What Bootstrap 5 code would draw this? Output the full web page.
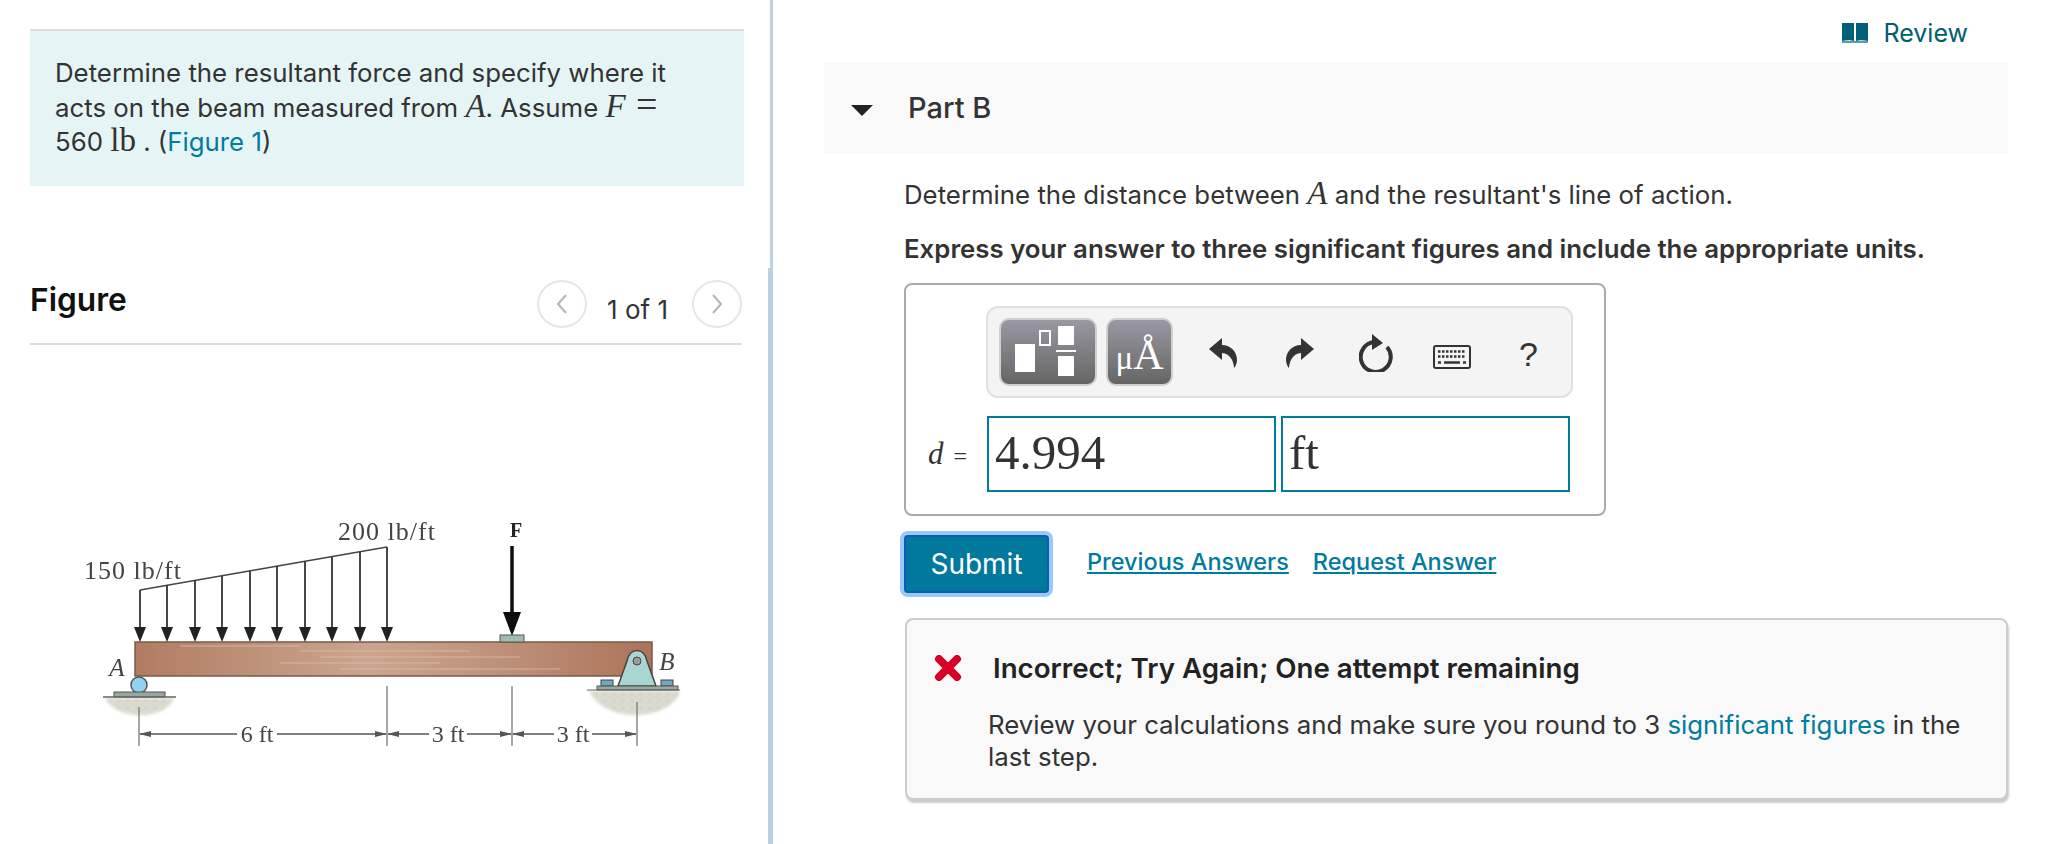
<!DOCTYPE html>
<html lang="en">
<head>
  <meta charset="UTF-8">
  <title>Part B</title>
  <link href="https://cdn.jsdelivr.net/npm/bootstrap@5.3.2/dist/css/bootstrap.min.css" rel="stylesheet">
  <style>
    html, body { height: 844px; overflow: hidden; }
    body { font-family: Inter, "Liberation Sans", Arial, sans-serif; font-size: 25.8px; line-height: 34px; color: #333; background: #fff; }
    a { color: #007c9e; text-decoration: none; }
    .math { font-family: "Liberation Serif", serif; font-size: 33px; line-height: 0; }
    .math-eq { font-size: 38px; margin-left: 3px; }
    .left-pane { width: 773px; height: 844px; flex: none; padding: 29px 28px 0 30px; border-right: 3px solid #bccfe4; position: relative; }
    .left-pane::after { content: ""; position: absolute; right: 0; top: 268px; bottom: 0; width: 2px; background: #bccfe4; }
    .intro-box { width: 714px; height: 157px; padding: 25px 25px 0; background: #e5f5f6; border-top: 2px solid #ddd; line-height: 34.5px; white-space: nowrap; }
    .fig-head { width: 712px; height: 67px; margin-top: 92px; border-bottom: 2px solid #ddd; }
    .fig-title { font-size: 31.7px; font-weight: 600; color: #111; line-height: 40px; margin-top: 2px; }
    .pager { width: 50px; height: 48px; border: 2px solid #e6e6e6; border-radius: 50%; }
    .pager-text { width: 64px; margin: 12px 21px 0 20px; font-size: 26px; line-height: 36px; white-space: nowrap; }
    .fig-svg { display: block; margin-left: -30px; }
    .right-pane { padding: 0 38px 0 51px; flex: 1 1 auto; min-width: 0; }
    .review-row { height: 62px; padding: 16px 40px 0 0; font-size: 25px; }
    .review-row a { color: #005e70; }
    .part-bar { height: 92px; background: #f9f9f9; padding-left: 27px; font-size: 29px; font-weight: 500; }
    .part-bar svg { margin: 4px 35px 0 0; }
    .part-body { padding-left: 80px; }
    .q-line { margin: 24px 0 0; }
    .q-bold { margin: 20px 0 0; font-weight: 600; }
    .answer-box { width: 702px; height: 233px; margin: 17px 0 0; border: 2px solid #aaa; border-radius: 8px; padding: 21px 0 0 80px; }
    .tool-bar { width: 587px; height: 92px; background: #f4f4f4; border: 2px solid #e0e0e0; border-radius: 12px; }
    .tool-btn { height: 68px; background: linear-gradient(#9a98a2, #656565); border: 2px solid #d0d0d0; border-radius: 10px; color: #fff; }
    .tool-one { width: 98px; margin: 10px 0 0 11px; }
    .tool-two { width: 67px; margin: 10px 0 0 9px; font-family: "Liberation Serif", serif; font-size: 42px; line-height: 70px; text-align: center; }
    .tool-two span { font-size: 33px; }
    .undo-ico { margin: 30px 0 0 36px; }
    .redo-ico { margin: 30px 0 0 49px; }
    .reload-ico { margin: 26px 0 0 45px; }
    .keys-ico { margin: 37px 0 0 38px; }
    .help-mark { margin: 29px 0 0 48px; font-family: "Liberation Sans", sans-serif; font-size: 34px; line-height: 34px; }
    .input-row { margin: 18px 0 0 -63px; }
    .var-label { width: 64px; font-family: "Liberation Serif", serif; font-size: 24px; line-height: 76px; padding-left: 5px; white-space: nowrap; }
    .var-label i { font-size: 31px; margin-right: 10px; }
    .mq-input { width: 289px; height: 76px; border: 2px solid #007c9e; font-family: "Liberation Serif", serif; font-size: 49px; line-height: 70px; padding-left: 6px; }
    .mq-input + .mq-input { margin-left: 5px; }
    .submit-row { margin-top: 19px; }
    .submit-btn { width: 145px; height: 58px; background: #00799c; border: 2px solid #0a5fb0; border-radius: 4px; box-shadow: 0 0 0 4px #9ac8fb; color: #fff; font-size: 28px; padding: 0; line-height: 54px; }
    .submit-row a { text-decoration: underline; font-size: 23.5px; font-weight: 500; line-height: 34px; }
    .prev-link { margin: 10px 0 0 38px; }
    .req-link { margin: 10px 0 0 24px; }
    .feedback-box { width: 1103px; height: 182px; margin: 25px 0 0 1px; background: #f9f9f9; border: 2px solid #ccc; border-radius: 8px; box-shadow: 1px 3px 2px #ccc; padding: 31px 20px 0 27px; }
    .fb-title { font-size: 27.7px; font-weight: 600; color: #222; margin-left: 31px; }
    .fb-text { margin: 24px 0 0 54px; line-height: 32px; }
  </style>
</head>
<body>
<div class="d-flex">

  <div class="left-pane">
    <div class="intro-box">
      Determine the resultant force and specify where it<br>
      acts on the beam measured from <i class="math">A</i>. Assume <i class="math">F</i> <span class="math math-eq">=</span><br>
      560 <span class="math">lb</span> . (<a href="#">Figure 1</a>)
    </div>
    <div class="fig-head d-flex justify-content-between">
      <div class="fig-title">Figure</div>
      <div class="d-flex align-items-start" style="margin-top:2px">
        <div class="pager d-flex align-items-center justify-content-center">
          <svg width="12" height="22" viewBox="0 0 12 22"><path d="M10 2 2 11l8 9" fill="none" stroke="#b5b5b5" stroke-width="2"/></svg>
        </div>
        <div class="pager-text">1 of 1</div>
        <div class="pager d-flex align-items-center justify-content-center">
          <svg width="12" height="22" viewBox="0 0 12 22"><path d="M2 2l8 9-8 9" fill="none" stroke="#b5b5b5" stroke-width="2"/></svg>
        </div>
      </div>
    </div>

    <!-- beam figure, drawn in page coordinates -->
    <svg class="fig-svg" width="770" height="498" viewBox="0 346 770 498">
      <defs>
        <linearGradient id="beamFill" x1="0" x2="1" y1="0" y2="0">
          <stop offset="0" stop-color="#b07c62"/>
          <stop offset=".45" stop-color="#cba58f"/>
          <stop offset=".7" stop-color="#bf917a"/>
          <stop offset="1" stop-color="#ab7459"/>
        </linearGradient>
        <pattern id="speckle" width="9" height="7" patternUnits="userSpaceOnUse">
          <rect width="9" height="7" fill="#dcdcd0"/>
          <circle cx="2" cy="2" r="1" fill="#a9a99a"/>
          <circle cx="7" cy="5" r=".8" fill="#b5b5a8"/>
        </pattern>
        <filter id="soft"><feGaussianBlur stdDeviation=".5"/></filter>
        <filter id="softer"><feGaussianBlur stdDeviation="1.6"/></filter>
        <marker id="dimEnd" markerWidth="12" markerHeight="8" refX="11" refY="4" orient="auto-start-reverse" markerUnits="userSpaceOnUse"><path d="M0 1 12 4 0 7z" fill="#555"/></marker>
      </defs>
      <g filter="url(#soft)">
        <!-- ground -->
        <path d="M105 699H174C170 708 160 716 140 716 120 716 110 708 105 699Z" fill="url(#speckle)" filter="url(#softer)"/>
        <path d="M589 692H680C678 704 660 716 635 716 610 716 595 704 589 692Z" fill="url(#speckle)" filter="url(#softer)"/>
        <!-- beam -->
        <rect x="135" y="643" width="517" height="34" fill="url(#beamFill)" stroke="#7a5a4c" stroke-width="1.500"/>
        <g stroke="#e0c3b0" stroke-width="1" opacity=".7">
          <path d="M300 652H470M320 658H520M280 664H440M340 670H560M180 647H300"/>
        </g>
        <!-- distributed load -->
        <path d="M140 591 387 548" fill="none" stroke="#444" stroke-width="1.500"/>
        <g stroke="#333" stroke-width="1.800">
          <path d="M140 591V630M167 586V630M195 581V630M222 577V630M250 572V630M277 567V630M305 562V630M332 558V630M360 553V630M387 548V630"/>
        </g>
        <g fill="#222">
          <path d="M134 628h12l-6 15zM161 628h12l-6 15zM189 628h12l-6 15zM216 628h12l-6 15zM244 628h12l-6 15zM271 628h12l-6 15zM299 628h12l-6 15zM326 628h12l-6 15zM354 628h12l-6 15zM381 628h12l-6 15z"/>
        </g>
        <!-- F -->
        <path d="M512 547V618" stroke="#111" stroke-width="3.500"/>
        <path d="M503 613h18l-9 24z" fill="#111"/>
        <rect x="500" y="636" width="24" height="7" fill="#9dbcae" stroke="#555"/>
        <!-- roller A -->
        <circle cx="139" cy="686" r="8" fill="#8fd3f2" stroke="#555" stroke-width="1.500"/>
        <rect x="114" y="693" width="51" height="5" fill="#94a89f" stroke="#555"/>
        <path d="M103 698H176" stroke="#666" stroke-width="1.500"/>
        <!-- pin B -->
        <path d="M618 687 627 662C630 648 644 648 647 662L656 687Z" fill="#a9d5d2" stroke="#444" stroke-width="1.500"/>
        <circle cx="637" cy="662" r="4" fill="#999" stroke="#444"/>
        <rect x="601" y="681" width="12" height="6" fill="#6fa8c0" stroke="#444"/>
        <rect x="661" y="681" width="12" height="6" fill="#6fa8c0" stroke="#444"/>
        <rect x="597" y="687" width="81" height="4" fill="#94a89f" stroke="#555"/>
        <path d="M587 691H680" stroke="#666" stroke-width="1"/>
        <!-- dimension lines -->
        <g stroke="#777" stroke-width="1.300" fill="none">
          <path d="M139 708V747M387 687V747M512 687V747M637 703V747"/>
        </g>
        <g stroke="#555" stroke-width="1.300" fill="none">
          <path d="M140 735H237" marker-start="url(#dimEnd)"/>
          <path d="M277 735H386" marker-end="url(#dimEnd)"/>
          <path d="M388 735H429" marker-start="url(#dimEnd)"/>
          <path d="M467 735H511" marker-end="url(#dimEnd)"/>
          <path d="M513 735H554" marker-start="url(#dimEnd)"/>
          <path d="M592 735H636" marker-end="url(#dimEnd)"/>
        </g>
        <g font-family="Liberation Serif, serif" fill="#444" font-size="24">
          <text x="387" y="541" text-anchor="middle" font-size="26" letter-spacing="1">200 lb/ft</text>
          <text x="133" y="580" text-anchor="middle" font-size="26" letter-spacing="1">150 lb/ft</text>
          <text x="516" y="538" text-anchor="middle" font-weight="700" font-size="20" fill="#222">F</text>
          <text x="117" y="677" text-anchor="middle" font-style="italic" font-size="25">A</text>
          <text x="667" y="671" text-anchor="middle" font-style="italic" font-size="25">B</text>
          <text x="257" y="743" text-anchor="middle">6 ft</text>
          <text x="448" y="743" text-anchor="middle">3 ft</text>
          <text x="573" y="743" text-anchor="middle">3 ft</text>
        </g>
      </g>
    </svg>
  </div>

  <div class="right-pane">
    <div class="review-row d-flex justify-content-end align-items-start">
      <a href="#" class="d-flex align-items-center gap-3">
        <svg width="26" height="20" viewBox="0 0 26 20"><path d="M0 0h12v18c-3-1-8-1-12 0zM14 0h12v18c-4-1-9-1-12 0z" fill="#00607a"/><path d="M0 19h26" stroke="#5d9cae" stroke-width="2"/></svg>
        Review
      </a>
    </div>
    <div class="part-bar d-flex align-items-center">
      <svg width="22" height="11" viewBox="0 0 22 11"><path d="M0 0h22L11 11z" fill="#222"/></svg>
      <span>Part B</span>
    </div>
    <div class="part-body">
      <p class="q-line">Determine the distance between <i class="math">A</i> and the resultant's line of action.</p>
      <p class="q-bold">Express your answer to three significant figures and include the appropriate units.</p>

      <div class="answer-box">
        <div class="tool-bar d-flex align-items-start">
          <div class="tool-btn tool-one">
            <svg width="94" height="64" viewBox="1000 320 94 64">
              <rect x="1014" y="344" width="20" height="28" fill="#fff"/>
              <rect x="1039" y="331" width="10" height="14" fill="none" stroke="#fff" stroke-width="2"/>
              <rect x="1057" y="326" width="16" height="19" fill="#fff"/>
              <rect x="1055" y="350" width="20" height="2" fill="#fff"/>
              <rect x="1057" y="356" width="16" height="20" fill="#fff"/>
            </svg>
          </div>
          <div class="tool-btn tool-two"><span>μ</span>Å</div>
          <svg class="undo-ico" width="28" height="30" viewBox="0 0 28 30"><path d="M0 11 13 0V7C22 7 28 14 28 22 28 26 26 29 25 30 25 24 21 15 13 15V22Z" fill="#333"/></svg>
          <svg class="redo-ico" width="28" height="30" viewBox="0 0 28 30"><path d="M28 11 15 0V7C6 7 0 14 0 22 0 26 2 29 3 30 3 24 7 15 15 15V22Z" fill="#333"/></svg>
          <svg class="reload-ico" width="36" height="38" viewBox="0 0 36 38"><path d="M28 13A15 15 0 1 1 15 8" fill="none" stroke="#333" stroke-width="4"/><path d="M13 0 24 9 13 16Z" fill="#333"/></svg>
          <svg class="keys-ico" width="38" height="24" viewBox="0 0 38 24"><rect x="1" y="1" width="36" height="22" rx="2" fill="none" stroke="#333" stroke-width="2"/><path d="M5 6.500H33M5 11.500H33" stroke="#333" stroke-width="2.500" stroke-dasharray="2.500 1.500"/><path d="M5 17.500H8M11 17.500H27M30 17.500H33" stroke="#333" stroke-width="2.500"/></svg>
          <div class="help-mark">?</div>
        </div>
        <div class="input-row d-flex">
          <div class="var-label"><i>d</i><span>=</span></div>
          <div class="mq-input">4.994</div>
          <div class="mq-input">ft</div>
        </div>
      </div>

      <div class="submit-row d-flex align-items-start">
        <button type="button" class="btn submit-btn">Submit</button>
        <a href="#" class="prev-link">Previous Answers</a>
        <a href="#" class="req-link">Request Answer</a>
      </div>

      <div class="feedback-box">
        <div class="d-flex align-items-center">
          <svg width="28" height="26" viewBox="0 0 28 26"><path d="M5 4 23 22M23 4 5 22" stroke="#d90027" stroke-width="8" stroke-linecap="round"/></svg>
          <div class="fb-title">Incorrect; Try Again; One attempt remaining</div>
        </div>
        <div class="fb-text">Review your calculations and make sure you round to 3 <a href="#">significant figures</a> in the last step.</div>
      </div>
    </div>
  </div>

</div>
<script src="https://cdn.jsdelivr.net/npm/bootstrap@5.3.2/dist/js/bootstrap.bundle.min.js"></script>
</body>
</html>
